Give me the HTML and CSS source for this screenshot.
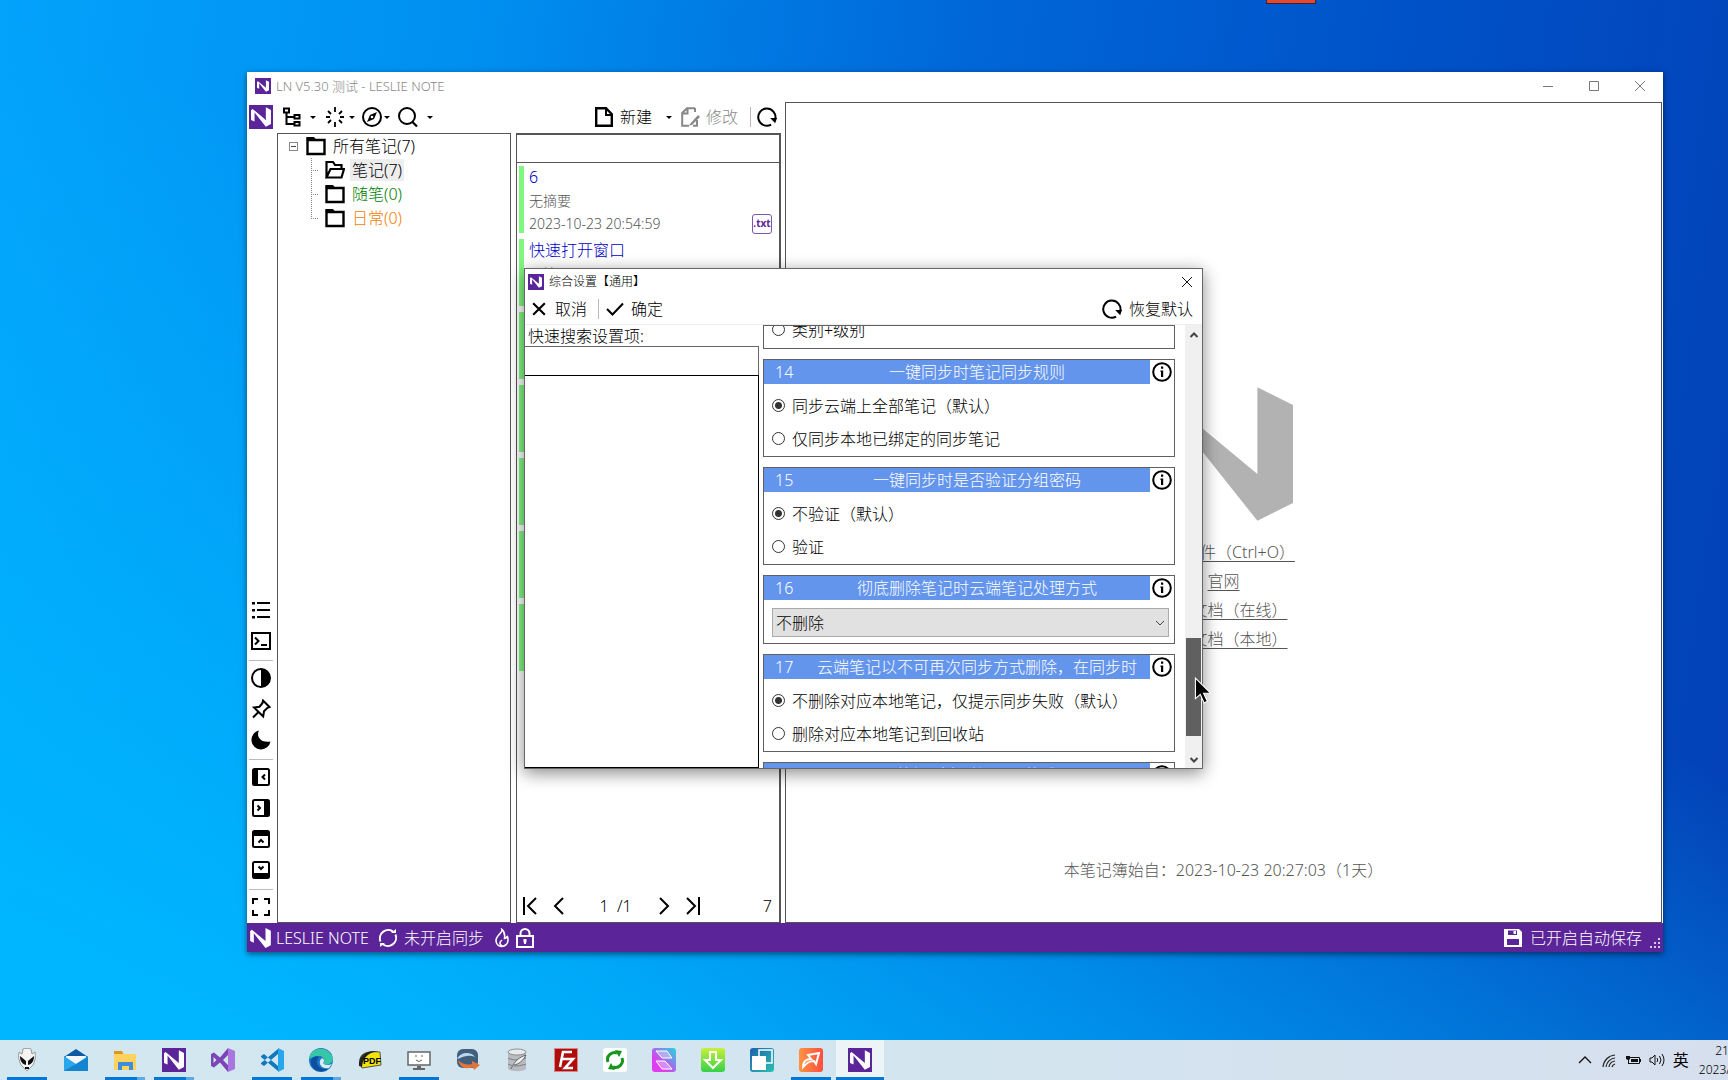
FILE: index.html
```
<!DOCTYPE html>
<html lang="zh-CN">
<head>
<meta charset="utf-8">
<title>LESLIE NOTE</title>
<link rel="stylesheet" href="styles.css">
</head>
<body>
<svg class="defs" aria-hidden="true">
  <symbol id="n" viewBox="0 0 62 60"><path fill="currentColor" d="M0 9L5 5L46 39V0L62 8V52L46 60L11 16V44L0 39Z"/></symbol>
  <symbol id="reload" viewBox="0 0 22 22"><path d="M15.500 19.500A9.500 9.500 0 1 1 20.200 13" fill="none" stroke="currentColor" stroke-width="2.200"/><path d="M14.500 12h7.500l-2 6z" fill="currentColor"/></symbol>
  <symbol id="folder" viewBox="0 0 20 20"><path d="M1.500 4V18H18.500V4Z" fill="none" stroke="currentColor" stroke-width="2.400"/><path d="M.3 1H8l2 2.500H.3z" fill="currentColor"/></symbol>
  <symbol id="folder-open" viewBox="0 0 20 20"><path d="M1.500 17V2H8l2 3h6.500v4M1.500 17.500l4-8.500H19l-2.500 8.500Z" fill="none" stroke="currentColor" stroke-width="2.200"/></symbol>
  <symbol id="info" viewBox="0 0 20 20"><circle cx="10" cy="10" r="8.800" fill="none" stroke="currentColor" stroke-width="2"/><path d="M9 4.500h2.200v2.200H9zM8.500 8.500h2.700v6.500H9v-5h-.5z" fill="currentColor"/></symbol>
</svg>

<div class="desktop">
  <div class="recorder"></div>

  <main class="window">
    <header class="titlebar">
      <span class="logo logo-s"><svg><use href="#n"/></svg></span>
      <h1>LN V5.30 测试 - LESLIE NOTE</h1>
      <div class="controls">
        <button aria-label="最小化"><svg viewBox="0 0 12 12"><path d="M1 6.500h10"/></svg></button>
        <button aria-label="最大化"><svg viewBox="0 0 12 12"><path d="M1.500 1.500h9v9h-9z"/></svg></button>
        <button aria-label="关闭"><svg viewBox="0 0 12 12"><path d="M1 1l10 10M11 1L1 11"/></svg></button>
      </div>
    </header>

    <div class="workspace">
      <div class="left">
        <div class="toolbar">
          <span class="logo logo-m"><svg><use href="#n"/></svg></span>
          <button class="tool" aria-label="结构"><svg viewBox="0 0 20 20" class="ico20"><g fill="none" stroke="currentColor" stroke-width="2"><path d="M2 1.500h5v4H2zM12.500 8h5v3.500h-5zM12.500 15h5v3.500h-5zM4.500 6v11H12M4.500 10H12"/></g></svg></button><i class="caret c1"></i>
          <button class="tool" aria-label="效果"><svg viewBox="0 0 20 20" class="ico20"><path d="M10 0v5M10 15v5M1 10h4M15 10h4M3 4l3 3M17 4l-3 3M3 16l3-3M17 16l-3-3" stroke="currentColor" stroke-width="1.800"/></svg></button><i class="caret c5"></i>
          <button class="tool" aria-label="导航"><svg viewBox="0 0 20 20" class="ico20"><circle cx="10" cy="10" r="9" fill="none" stroke="currentColor" stroke-width="2"/><path d="M15 5l-3 7-7 3 3-7z" fill="currentColor"/><circle cx="10" cy="10" r="1.300" fill="#fff"/></svg></button><i class="caret c2"></i>
          <button class="tool" aria-label="搜索"><svg viewBox="0 0 20 20" class="ico20"><circle cx="9" cy="9" r="8" fill="none" stroke="currentColor" stroke-width="2"/><path d="M14.500 15l4.500 4.500" stroke="currentColor" stroke-width="2.200"/></svg></button><i class="caret c3"></i>
          <span class="grow"></span>
          <button class="tool"><svg viewBox="0 0 18 20" class="ico18"><path d="M1.200 1.200H11l5.800 6V18.800H1.200Z" fill="none" stroke="currentColor" stroke-width="2.400"/><path d="M10 1h2v6h5v2h-7z" fill="currentColor"/></svg>新建</button><i class="caret c4"></i>
          <button class="tool off"><svg viewBox="0 0 20 20" class="ico20"><path d="M14 1.200H6L1.200 6V18.800H8M14 1v4M1.500 6.500h5v-5M16 13v5.800h-4" fill="none" stroke="currentColor" stroke-width="2"/><path d="M9 17l8-9 2 2-8 8-3 .5z" fill="currentColor"/></svg>修改</button>
          <i class="vsep"></i>
          <button class="tool" aria-label="刷新"><svg class="ico20"><use href="#reload"/></svg></button>
        </div>

        <div class="panes">
          <nav class="rail" aria-label="工具">
            <button aria-label="列表"><svg viewBox="0 0 20 20"><path d="M6 3h13M6 10h13M6 17h13" stroke="currentColor" stroke-width="2"/><path d="M1 2h3v2.500H1zM1 9h3v2.500H1zM1 16h3v2.500H1z" fill="currentColor"/></svg></button>
            <button aria-label="终端"><svg viewBox="0 0 20 20"><path d="M1 2h18v16H1z" fill="none" stroke="currentColor" stroke-width="2"/><path d="M4 6.500L7.500 10 4 13.500M10 14h6" fill="none" stroke="currentColor" stroke-width="2"/></svg></button>
            <hr>
            <button aria-label="对比"><svg viewBox="0 0 20 20"><circle cx="10" cy="10" r="9" fill="none" stroke="currentColor" stroke-width="2"/><path d="M10 1a9 9 0 0 1 0 18z" fill="currentColor"/></svg></button>
            <button aria-label="固定"><svg viewBox="0 0 20 20"><path d="M12 1.500l6.500 6.500-2 .8-3.500 3.500-.8 5.200L3 8.500l5.500-.8 3-3.700zM7.500 13L2 18.500" fill="none" stroke="currentColor" stroke-width="2"/></svg></button>
            <button aria-label="夜间"><svg viewBox="0 0 20 20"><path d="M8 .5C5 6 9 13 19.500 11.500A9.600 9.600 0 1 1 8 .5z" fill="currentColor"/></svg></button>
            <hr>
            <button aria-label="左栏"><svg viewBox="0 0 20 20"><rect x="2" y="2" width="16" height="16" rx="1.500" fill="none" stroke="currentColor" stroke-width="2"/><path d="M2 2h5v16H2z" fill="currentColor"/><path d="M14 7.500L11.500 10l2.500 2.500" fill="none" stroke="currentColor" stroke-width="2"/></svg></button>
            <button aria-label="右栏"><svg viewBox="0 0 20 20"><rect x="2" y="2" width="16" height="16" rx="1.500" fill="none" stroke="currentColor" stroke-width="2"/><path d="M13 2h5v16h-5z" fill="currentColor"/><path d="M6.500 7.500L9 10l-2.500 2.500" fill="none" stroke="currentColor" stroke-width="2"/></svg></button>
            <button aria-label="顶栏"><svg viewBox="0 0 20 20"><rect x="2" y="2" width="16" height="16" rx="1.500" fill="none" stroke="currentColor" stroke-width="2"/><path d="M2 2h16v5H2z" fill="currentColor"/><path d="M7.500 13.500L10 11l2.500 2.500" fill="none" stroke="currentColor" stroke-width="2"/></svg></button>
            <button aria-label="底栏"><svg viewBox="0 0 20 20"><rect x="2" y="2" width="16" height="16" rx="1.500" fill="none" stroke="currentColor" stroke-width="2"/><path d="M2 13h16v5H2z" fill="currentColor"/><path d="M7.500 6.500L10 9l2.500-2.500" fill="none" stroke="currentColor" stroke-width="2"/></svg></button>
            <hr>
            <button aria-label="全屏"><svg viewBox="0 0 20 20"><path d="M2 7V2h5M13 2h5v5M18 13v5h-5M7 18H2v-5" fill="none" stroke="currentColor" stroke-width="2"/></svg></button>
          </nav>

          <section class="tree" aria-label="分组">
            <div class="node"><i class="expander"></i><svg class="ico20"><use href="#folder"/></svg><span>所有笔记(7)</span></div>
            <ul>
              <li class="sel"><svg class="ico20"><use href="#folder-open"/></svg><span>笔记(7)</span></li>
              <li class="green"><svg class="ico20"><use href="#folder"/></svg><span>随笔(0)</span></li>
              <li class="orange"><svg class="ico20"><use href="#folder"/></svg><span>日常(0)</span></li>
            </ul>
          </section>

          <section class="notes" aria-label="笔记列表">
            <input class="notes-search" type="text" aria-label="搜索笔记">
            <div class="items">
              <article><h2>6</h2><p>无摘要</p><p class="foot">2023-10-23 20:54:59<span class="txt">.txt</span></p></article>
              <article><h2>快速打开窗口</h2><p>无摘要</p></article>
              <article></article><article></article><article></article><article></article><article></article>
            </div>
            <div class="pager">
              <button aria-label="首页"><svg viewBox="0 0 16 18"><path d="M2 0v18M14 1L6 9l8 8"/></svg></button>
              <button aria-label="上一页"><svg viewBox="0 0 16 18"><path d="M12 1L4 9l8 8"/></svg></button>
              <span class="page">1&nbsp; /1</span>
              <button aria-label="下一页"><svg viewBox="0 0 16 18"><path d="M4 1l8 8-8 8"/></svg></button>
              <button aria-label="末页"><svg viewBox="0 0 16 18"><path d="M14 0v18M2 1l8 8-8 8"/></svg></button>
              <span class="total">7</span>
            </div>
          </section>
        </div>
      </div>

      <section class="editor">
        <svg class="biglogo"><use href="#n"/></svg>
        <div class="links">
          <a href="#">打开文件（Ctrl+O）</a>
          <a href="#">官网</a>
          <a href="#">帮助文档（在线）</a>
          <a href="#">帮助文档（本地）</a>
        </div>
        <p class="since">本笔记簿始自：2023-10-23 20:27:03（1天）</p>
      </section>
    </div>

    <footer class="status">
      <svg class="status-logo"><use href="#n"/></svg><span class="brand">LESLIE NOTE</span>
      <svg class="ico20" viewBox="0 0 20 20"><path d="M2.500 13.500A8.300 8.300 0 0 1 15.500 4M17.500 6.500A8.300 8.300 0 0 1 4.500 16" fill="none" stroke="currentColor" stroke-width="2"/><path d="M13 5h5V1zM7 15H2v4z" fill="currentColor"/></svg><span class="sync">未开启同步</span>
      <svg class="flame" viewBox="0 0 16 20"><path d="M8 1.500c1 3-6 6-6 11 0 4 3 6 5.500 6s6.500-2 6.500-6c0-2 0-3-.5-4-1 .3-1 2-3 2C11 7 10.500 3.500 8 1.500zM8 18c-3-2-2.500-4 0-6" fill="none" stroke="currentColor" stroke-width="1.600"/></svg>
      <svg class="ico20" viewBox="0 0 20 20"><path d="M2 8h16v11H2zM5.500 8V5.500a4.500 4.500 0 0 1 9 0V8" fill="none" stroke="currentColor" stroke-width="2"/><path d="M8.500 11h3v2.500l-.7 2.500H9.200l-.7-2.500z" fill="currentColor"/></svg>
      <span class="grow"></span>
      <svg class="ico18" viewBox="0 0 18 18"><path fill-rule="evenodd" d="M0 0h15l3 3v15H0zM4 1.500V6h9V1.500zM3 10v6h12v-6z" fill="currentColor"/><path d="M9.500 2H12v3H9.500z" fill="currentColor"/></svg><span class="saved">已开启自动保存</span>
      <svg class="grip" viewBox="0 0 12 12"><path d="M9 0h2v2H9zM5 4h2v2H5zM9 4h2v2H9zM1 8h2v2H1zM5 8h2v2H5zM9 8h2v2H9z" fill="#d8c8ee"/></svg>
    </footer>
  </main>

  <section class="dialog" role="dialog" aria-labelledby="dlg-title">
    <header class="dlg-title">
      <span class="logo logo-s"><svg><use href="#n"/></svg></span>
      <h2 id="dlg-title">综合设置【通用】</h2>
      <button aria-label="关闭"><svg viewBox="0 0 12 12"><path d="M1 1l10 10M11 1L1 11" stroke="#111"/></svg></button>
    </header>
    <div class="dlg-tools">
      <button><svg class="ico14" viewBox="0 0 12 12"><path d="M1 1l10 10M11 1L1 11" stroke="currentColor" stroke-width="1.800"/></svg>取消</button>
      <i class="vsep"></i>
      <button class="ok"><svg class="check" viewBox="0 0 18 14"><path d="M1 7l5.500 5.500L17 1.500" fill="none" stroke="currentColor" stroke-width="2"/></svg>确定</button>
      <span class="grow"></span>
      <button class="reset"><svg class="ico20"><use href="#reload"/></svg>恢复默认</button>
    </div>
    <div class="dlg-body">
      <div class="finder">
        <label for="find">快速搜索设置项:</label>
        <input id="find" type="text">
        <div class="results"></div>
      </div>
      <div class="settings">
        <fieldset class="card cut"><label><input type="radio" name="s13">类别+级别</label></fieldset>
        <fieldset class="card">
          <div class="head"><b>14</b><span>一键同步时笔记同步规则</span><button aria-label="说明"><svg><use href="#info"/></svg></button></div>
          <div class="opts"><label><input type="radio" name="s14" checked>同步云端上全部笔记（默认）</label><label><input type="radio" name="s14">仅同步本地已绑定的同步笔记</label></div>
        </fieldset>
        <fieldset class="card">
          <div class="head"><b>15</b><span>一键同步时是否验证分组密码</span><button aria-label="说明"><svg><use href="#info"/></svg></button></div>
          <div class="opts"><label><input type="radio" name="s15" checked>不验证（默认）</label><label><input type="radio" name="s15">验证</label></div>
        </fieldset>
        <fieldset class="card">
          <div class="head"><b>16</b><span id="t16">彻底删除笔记时云端笔记处理方式</span><button aria-label="说明"><svg><use href="#info"/></svg></button></div>
          <div class="pick"><select aria-labelledby="t16"><option>不删除</option></select><svg viewBox="0 0 10 6"><path d="M1 1l4 4 4-4" fill="none" stroke="#444"/></svg></div>
        </fieldset>
        <fieldset class="card">
          <div class="head"><b>17</b><span>云端笔记以不可再次同步方式删除，在同步时</span><button aria-label="说明"><svg><use href="#info"/></svg></button></div>
          <div class="opts"><label><input type="radio" name="s17" checked>不删除对应本地笔记，仅提示同步失败（默认）</label><label><input type="radio" name="s17">删除对应本地笔记到回收站</label></div>
        </fieldset>
        <fieldset class="card">
          <div class="head"><b>18</b><span>笔记列表时间显示格式</span><button aria-label="说明"><svg><use href="#info"/></svg></button></div>
        </fieldset>
      </div>
      <div class="scroll">
        <svg viewBox="0 0 10 6"><path d="M1.500 5L5 1.500 8.500 5"/></svg>
        <i class="thumb"></i>
        <svg viewBox="0 0 10 6"><path d="M1.500 1L5 4.500 8.500 1"/></svg>
      </div>
    </div>
  </section>

  <svg class="cursor" viewBox="0 0 16 25"><path d="M1 1v19l4.500-4 3.500 8 3-1.500-3.500-7.500H15z" fill="#000" stroke="#fff"/></svg>

  <footer class="taskbar">
    <button class="run" aria-label="foobar"><svg viewBox="0 0 24 24"><path d="M4 4l3 2 1-5c2-1 6-1 8 0l1 5 3-2c1 5 0 9-2 13l-6 6-6-6C4 13 3 9 4 4z" fill="#f4f4f4" stroke="#999"/><path d="M5 8l6 5v4c-4-1-6-4-6-9zM19 8l-6 5v4c4-1 6-4 6-9zM10 19h4v2h-4z" fill="#111"/></svg></button>
    <button aria-label="邮件"><svg viewBox="0 0 24 24"><path d="M0 9L12 1l12 8v5H0z" fill="#0c59a4"/><path d="M2 8h20v8H2z" fill="#f4f8fb"/><path d="M0 8v15h24V8l-12 8z" fill="#28a8ea"/><path d="M0 23l24-14v14z" fill="#1584d0"/></svg></button>
    <button class="run many" aria-label="文件"><svg viewBox="0 0 24 24"><path d="M1 3h8l2 3h12v16H1z" fill="#ffd35e"/><path d="M1 3h8l1 3H1z" fill="#d99a1c"/><path d="M5 22v-8h15v8h-4v-4H9v4z" fill="#3d8edb"/></svg></button>
    <button class="run many" aria-label="LN"><span class="logo logo-m"><svg><use href="#n"/></svg></span></button>
    <button aria-label="Visual Studio"><svg viewBox="0 0 24 24"><path fill-rule="evenodd" d="M0 6l3-1.500 6 5L17 0v7l-5 5 5 5v7L9 14.500l-6 5L0 18zM2.500 9v6l3-3z" fill="#7b45b5"/><path d="M17 0l7 3v18l-7 3z" fill="#a777df"/></svg></button>
    <button class="run" aria-label="VS Code"><svg viewBox="0 0 24 24"><path d="M1 8l3-2 14 12v5L1 9zM1 16l3 2L18 6V1L1 15z" fill="#0f79c0"/><path d="M18 0l6 3v18l-6 3z" fill="#28a5eb"/></svg></button>
    <button class="run many" aria-label="Edge"><svg viewBox="0 0 24 24"><circle cx="12" cy="12" r="12" fill="#1a74c8"/><path d="M0 11C1-1 19-4 24 10c0 6-6 8-10 6 3-4 0-8-4-8-5 0-8 2-10 3z" fill="#38c7a6"/><path d="M10 9c-5 6 0 13 9 12-6 5-16 2-17-6-1-5 5-8 8-6z" fill="#0d4f9e"/><path d="M13 10c2 1 3 3 1 5 2 3 6 2 9 1l-3 4c-8 2-12-6-7-10z" fill="#dcecf4"/></svg></button>
    <button aria-label="PDF"><svg viewBox="0 0 24 24"><path d="M2 14C1 5 9 3 22 4l1 13-19 3z" fill="#f4e30a" stroke="#555"/><path d="M1 18C0 7 8 2 20 3 11 5 5 8 4 19z" fill="#222"/><text x="5" y="16" font-family="Liberation Sans" font-weight="bold" font-size="9">PDF</text></svg></button>
    <button class="run" aria-label="录屏"><svg viewBox="0 0 24 24"><path d="M1 4h22v13H1z" fill="#fff" stroke="#666" stroke-width="1.500"/><path d="M10 18h4v2h4v2H6v-2h4z" fill="#666"/><path d="M9 7v2M15 7v2M9 12q3 3 6 0" fill="none" stroke="#666"/></svg></button>
    <button aria-label="浏览"><svg viewBox="0 0 24 24"><rect x="1" y="1" width="21" height="19" rx="6" fill="#3f5f7c"/><path d="M1 11C5 3 16 4 19 9 13 6 7 9 1 11z" fill="#b9d8ec"/><path d="M2 12c5 5 10 5 14 4v-3l8 4-6 5-1-3C10 22 4 20 2 12z" fill="#e2743a"/></svg></button>
    <button aria-label="数据库"><svg viewBox="0 0 24 24"><path d="M3 4v17c4 3 14 3 18 0V4z" fill="#b8bcc0"/><ellipse cx="12" cy="4" rx="9" ry="3" fill="#e7e9eb" stroke="#8c9094"/><path d="M3 10c5 3 13 2 18 0M3 16c5 3 13 2 18 0" fill="none" stroke="#7a7e82"/><path d="M6 21C10 12 15 9 21 7c-3 6-7 9-12 10" fill="#eee" stroke="#666"/></svg></button>
    <button aria-label="FileZilla"><svg viewBox="0 0 24 24"><path d="M0 0h24v24H0z" fill="#b00d0d"/><path d="M.5.5h23v23H.5z" fill="none" stroke="#fff" stroke-dasharray="1 1"/><path d="M6 19L9 4h9M7 11h8M12 11h7l-8 9h8" fill="none" stroke="#fff" stroke-width="2.600"/></svg></button>
    <button aria-label="同步"><svg viewBox="0 0 24 24"><rect width="24" height="24" rx="3" fill="#fff"/><path d="M5 14A7 7 0 0 1 14 5M19 10A7 7 0 0 1 10 19" fill="none" stroke="#16951d" stroke-width="3"/><path d="M12 2l7 1-3 6zM12 22l-7-1 3-6z" fill="#16951d"/></svg></button>
    <button aria-label="设计"><svg viewBox="0 0 24 24"><defs><linearGradient id="g1" x1="0" y1="1" x2="1" y2="0"><stop offset=".3" stop-color="#e03cf0"/><stop offset="1" stop-color="#20d8e0"/></linearGradient></defs><rect width="24" height="24" rx="3" fill="url(#g1)"/><path d="M4 3h11l5 7H10zM4 13h9l7 8H10z" fill="#ffffff55" stroke="#fff"/></svg></button>
    <button aria-label="下载"><svg viewBox="0 0 24 24"><defs><linearGradient id="g2" x1="0" y1="0" x2="0" y2="1"><stop stop-color="#c8f03a"/><stop offset="1" stop-color="#35d048"/></linearGradient></defs><rect width="24" height="24" rx="3" fill="url(#g2)"/><path d="M9 4h6v8h5l-8 8-8-8h5z" fill="none" stroke="#fff" stroke-width="2"/></svg></button>
    <button aria-label="窗口"><svg viewBox="0 0 24 24"><defs><linearGradient id="g3" x1="0" y1="0" x2="1" y2="1"><stop stop-color="#1c62b0"/><stop offset="1" stop-color="#2cc0b0"/></linearGradient></defs><rect width="24" height="24" rx="3" fill="url(#g3)"/><path d="M9 8V2h13v13h-6" fill="none" stroke="#fff" stroke-width="1.500"/><path d="M2 8h14v14H2z" fill="#fff"/></svg></button>
    <button class="run" aria-label="转换"><svg viewBox="0 0 24 24"><defs><linearGradient id="g4"><stop stop-color="#ff9440"/><stop offset="1" stop-color="#ff4d40"/></linearGradient></defs><rect width="24" height="24" rx="3" fill="url(#g4)"/><path d="M4 19c0-6 3-8 8-8L9 7l11-2-3 11-2-3c-5 0-7 2-11 6z" fill="none" stroke="#fff" stroke-width="2"/></svg></button>
    <button class="run active" aria-label="LN"><span class="logo logo-m"><svg><use href="#n"/></svg></span></button>
    <div class="tray">
      <svg viewBox="0 0 16 16"><path d="M2 11l6-6 6 6" fill="none" stroke="#111" stroke-width="1.300"/></svg>
      <svg viewBox="0 0 16 16"><path d="M2 15A13 13 0 0 1 14 3M5 15a10 10 0 0 1 9-9M8 15a7 7 0 0 1 6-6M11 15a4 4 0 0 1 3-3" fill="none" stroke="#222" stroke-width="1.200"/></svg>
      <svg viewBox="0 0 16 16"><path d="M5 5.500h9.500v6H4" fill="none" stroke="#111"/><path d="M6 7h7v3H6zM15 7h1v3h-1zM1 4h4v3L4 8v4H3V8L1 7z" fill="#111"/></svg>
      <svg viewBox="0 0 16 16"><path d="M1 6h2l3-3v10l-3-3H1zM8 6q1.500 2 0 4M10.500 4q3 4 0 8M13 2q4 6 0 12" fill="none" stroke="#111"/></svg>
      <span class="ime">英</span>
      <div class="clock"><span>21:05</span><span>2023/10/24</span></div>
    </div>
  </footer>
</div>
</body>
</html>
```
FILE: styles.css
```
* { box-sizing: border-box; }
body, h1, h2, p, ul, fieldset { margin: 0; padding: 0; }
body { font: 300 16px/24px "Noto Sans", "Noto Sans CJK SC", sans-serif; color: #000; overflow: hidden; }
button, input, select { font: inherit; color: inherit; border-radius: 0; }
button { display: flex; align-items: center; justify-content: center; padding: 0; border: 0; background: none; white-space: nowrap; }
svg { flex: none; display: block; }
ul { list-style: none; }
.defs { position: absolute; width: 0; height: 0; }
.grow { flex: 1; }
.ico20 { width: 20px; height: 20px; }
.ico18 { width: 18px; height: 20px; }
.ico14 { width: 14px; height: 14px; }

.desktop {
  position: relative; height: 100vh; overflow: hidden; display: flex; flex-direction: column; justify-content: flex-end;
  background: linear-gradient(24deg, #00b6ff 8%, #00b6ff00 58%), linear-gradient(98deg, #03a2fb 0%, #0090f0 25%, #0067d8 52%, #0052c8 75%, #0340b6 100%);
}
.recorder { position: absolute; top: 0; left: 1266px; width: 50px; height: 4px; background: #e04a35; border: solid #3a2030; border-width: 0 1px 1px; }

.logo { display: flex; align-items: center; justify-content: center; background: #5b2599; color: #fff; flex: none; }
.logo-s { width: 16px; height: 16px; }
.logo-s svg { width: 12px; height: 12px; }
.logo-m { width: 24px; height: 24px; }
.logo-m svg { width: 20px; height: 20px; }

.window {
  position: absolute; left: 247px; right: 65px; top: 72px; bottom: 128px; display: flex; flex-direction: column;
  background: #fff; box-shadow: 0 2px 6px #0008;
}
.titlebar { height: 30px; display: flex; align-items: center; gap: 5px; padding: 0 0 2px 8px; }
.titlebar h1 { flex: 1; font-size: 13px; font-weight: inherit; color: #888; }
.controls { display: flex; }
.controls button { width: 46px; height: 28px; }
.controls svg, .dlg-title button svg { width: 12px; height: 12px; fill: none; stroke: #777; }

.workspace { flex: 1; min-height: 0; display: flex; }
.left { width: 538px; flex: none; display: flex; flex-direction: column; }
.toolbar { height: 31px; display: flex; align-items: center; padding: 0 8px 1px 2px; }
.toolbar .logo { margin-right: 9px; }
.tool { gap: 7px; }
.off { color: #888; gap: 5px; }
.caret { border: 3px solid transparent; border-top-color: #000; border-bottom: 0; }
.c1 { margin: 0 9px 0 8px; }
.c2 { margin: 0 8px 0 2px; }
.c3 { margin-left: 9px; }
.c4 { margin: 0 9px 0 14px; }
.c5 { margin: 0 7px 0 4px; }
.vsep { width: 1px; height: 20px; background: #bbb; margin: 0 6px 0 12px; }

.panes { flex: 1; min-height: 0; display: flex; }
.rail { width: 30px; display: flex; flex-direction: column; justify-content: flex-end; padding: 0 6px 1px 4px; }
.rail button { height: 31px; }
.rail svg { width: 20px; height: 20px; }
.rail hr { width: 24px; margin: 4px -2px 1px; border: 0; border-top: 1px solid #bbb; }
.tree { width: 234px; border: 1px solid #555; margin-right: 5px; padding-left: 11px; }
.node, .tree li { display: flex; align-items: center; height: 24px; }
.tree span { padding: 0 2px; margin-left: 5px; line-height: 22px; }
.expander { width: 9px; height: 9px; border: 1px solid #888; background: linear-gradient(#444, #444) 1px 3px / 5px 1px no-repeat; margin-right: 8px; }
.tree ul { margin-left: 22px; background: repeating-linear-gradient(#888 0 1px, transparent 1px 2px) 0 0 / 1px 60px no-repeat; }
.tree li::before { content: ""; width: 7px; border-top: 1px dotted #888; margin-right: 7px; }
.sel span { background: #eee; }
.green span { color: #008000; }
.orange span { color: #f08000; }

.notes { width: 265px; border: solid #555; border-width: 2px 2px 1px 1px; display: flex; flex-direction: column; }
.notes-search { width: 100%; height: 28px; border: 0; border-bottom: 1px solid #555; outline: 0; }
.items { flex: 1; min-height: 0; overflow: hidden; padding: 3px 7px 0 2px; display: flex; flex-direction: column; gap: 6px; }
.items article { flex: none; height: 67px; padding-left: 5px; border-left: 5px solid #80f880; font-size: 14px; color: #555; }
.items h2 { font-size: 16px; font-weight: inherit; line-height: 23px; color: #0000c8; }
.items p { line-height: 23px; }
.foot { display: flex; justify-content: space-between; align-items: center; }
.txt { width: 20px; height: 20px; border: 1px solid #7d56ad; border-radius: 3px; color: #5b2599; font: bold 10px/17px "Noto Sans", sans-serif; text-align: center; }
.pager { height: 32px; display: flex; align-items: center; padding: 0 7px 0 5px; gap: 13px; }
.pager svg { width: 16px; height: 18px; fill: none; stroke: #000; stroke-width: 2; }
.page { width: 55px; text-align: center; margin-left: 8px; }
.total { flex: 1; text-align: right; }

.editor { flex: 1; min-width: 0; border: 1px solid #555; display: flex; flex-direction: column; align-items: center; color: #555; margin-right: 1px; }
.biglogo { width: 138px; height: 134px; color: #b2b2b2; margin-top: 284px; }
.links { display: flex; flex-direction: column; align-items: center; gap: 5px; margin-top: 19px; }
.links a { color: inherit; text-underline-offset: 3px; }
.since { margin-top: auto; margin-bottom: 40px; }

.status { height: 29px; display: flex; align-items: center; padding: 0 2px 0 3px; background: #5b2599; color: #fff; }
.status-logo { width: 21px; height: 20px; }
.brand { margin: 0 9px 0 5px; }
.sync { margin: 0 10px 0 6px; }
.flame { width: 16px; height: 20px; margin-right: 5px; }
.saved { margin: 0 7px 0 8px; }
.grip { width: 12px; height: 12px; align-self: flex-end; margin-bottom: 2px; }

.dialog {
  position: absolute; left: 524px; top: 268px; width: 679px; height: 501px; display: flex; flex-direction: column;
  background: #fff; border: 1px solid #666; box-shadow: 0 4px 16px #0007;
}
.dlg-title { height: 25px; display: flex; align-items: center; gap: 5px; padding: 0 3px; }
.dlg-title h2 { flex: 1; font-size: 12px; font-weight: inherit; }
.dlg-title button { width: 24px; height: 24px; }
.dlg-tools { height: 31px; display: flex; align-items: center; padding: 0 9px 1px 7px; border-bottom: 1px solid #eee; }
.dlg-tools button { gap: 9px; }
.dlg-tools .vsep { margin: 0 7px 0 11px; }
.dlg-tools .ok, .dlg-tools .reset { gap: 7px; }
.check { width: 18px; height: 14px; }
.dlg-body { flex: 1; min-height: 0; display: flex; }
.finder { width: 234px; display: flex; flex-direction: column; }
.finder label { padding-left: 3px; line-height: 22px; height: 21px; }
.finder input { height: 29px; width: 100%; border: 1px solid #666; border-width: 1px 1px 0 0; outline: 0; }
.results { flex: 1; border: 1px solid #000; border-left: 0; }
.settings { flex: 1; min-width: 0; overflow: hidden; padding: 0 10px 0 4px; display: flex; flex-direction: column; gap: 10px; }
.card { flex: none; border: 1px solid #606060; min-width: 0; }
.card label { display: flex; align-items: center; gap: 7px; height: 33px; padding-left: 8px; white-space: nowrap; }
.cut { height: 24px; overflow: hidden; display: flex; flex-direction: column; justify-content: flex-end; padding-bottom: 2px; }
.cut label { flex: none; }
.head { height: 24px; display: flex; color: #fff; background: #6495ed; }
.head b { width: 40px; padding-left: 11px; font-weight: inherit; }
.head span { flex: 1; text-align: center; white-space: nowrap; }
.head button { width: 24px; background: #fff; color: #000; }
.head svg { width: 20px; height: 20px; }
.opts { padding: 5px 0 1px; }
input[type=radio] { appearance: none; width: 13px; height: 13px; margin: 0; border: 1px solid #333; border-radius: 50%; background: #fff; }
input[type=radio]:checked { background: radial-gradient(#333 0 3px, #fff 4px); }
.pick { display: grid; align-items: center; padding: 8px 5px 6px 8px; }
.pick select { grid-area: 1 / 1; height: 29px; appearance: none; border: 1px solid #aaa; background: #e1e1e1; padding: 0 3px; }
.pick svg { grid-area: 1 / 1; justify-self: end; width: 10px; height: 6px; margin-right: 4px; pointer-events: none; }
.scroll { width: 17px; background: #f0f0f0; display: flex; flex-direction: column; align-items: center; padding: 7px 0 5px; }
.scroll svg { width: 10px; height: 6px; fill: none; stroke: #444; stroke-width: 2; }
.thumb { width: 15px; height: 98px; background: #606060; margin: auto 0 21px; }
.cursor { position: absolute; left: 1194px; top: 677px; width: 18px; height: 27px; }

.taskbar { height: 40px; display: flex; gap: 1px; padding-left: 3px; background: linear-gradient(90deg, #d2e7f0, #d3e4ef 60%, #d6dfed); }
.taskbar > button { width: 48px; border-bottom: 3px solid transparent; padding-top: 3px; flex: none; }
.taskbar > button > svg { width: 24px; height: 24px; }
.run { background: linear-gradient(#0078d7, #0078d7) 50% 100% / 40px 3px no-repeat border-box; }
.many { background: linear-gradient(90deg, #0078d7 32px, #5fa8e0 32px) 50% 100% / 40px 3px no-repeat border-box; }
.active { background: linear-gradient(#0078d7, #0078d7) 0 100% / 48px 3px no-repeat border-box, #edf4f8; }
.tray { margin-left: auto; margin-right: -34px; display: flex; align-items: center; gap: 8px; }
.tray svg { width: 16px; height: 16px; }
.ime { width: 16px; font-weight: 400; }
.clock { display: flex; flex-direction: column; align-items: center; font-size: 12px; line-height: 19px; margin-left: 2px; }
```
